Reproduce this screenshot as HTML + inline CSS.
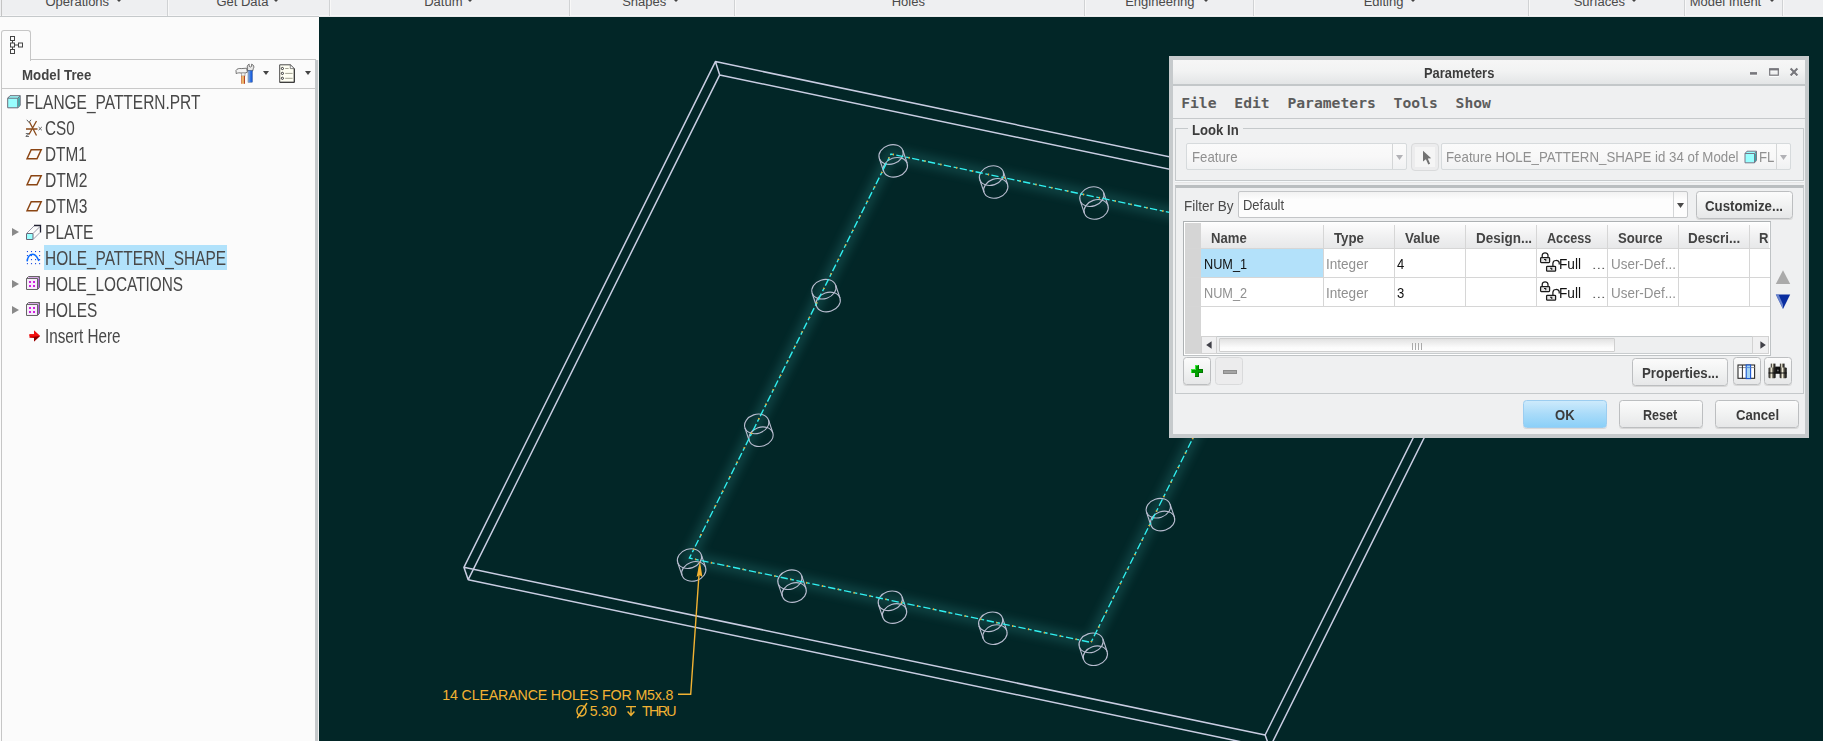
<!DOCTYPE html>
<html lang="en"><head><meta charset="utf-8"><title>FLANGE_PATTERN - Parameters</title>
<style>
html,body{margin:0;padding:0}
body{width:1823px;height:741px;overflow:hidden;position:relative;background:#022627;font-family:"Liberation Sans",sans-serif;color:#444}
i{display:block;position:absolute;font-style:normal}
.abs{position:absolute;display:block;line-height:0}
.t{position:absolute;white-space:nowrap;transform-origin:0 50%;color:#4a4a4a}
#cv{position:absolute;left:0;top:0}

#rib{position:absolute;left:0;top:0;width:1823px;height:17px;background:linear-gradient(#eeeff1 0,#eeeff1 15px,#f6f6f7 15px,#f6f6f7 16px,#eaebec 16px);overflow:hidden}
#rib:after{content:"";position:absolute;left:0;top:16px;width:319px;height:1px;background:#c5c9cb}
#rib:before{content:"";position:absolute;left:1px;top:0;width:1px;height:16px;background:#c4c4c4}
.rs{top:0;width:1px;height:15.5px;background:#d0d2d4;box-shadow:1px 0 0 #f8f8f8}
.rl{position:absolute;top:-6.8px;font-size:13px;line-height:18px;color:#4a4a4a;white-space:nowrap}
.ra{top:0px;width:0;height:0;border-left:2.5px solid transparent;border-right:2.5px solid transparent;border-top:2.5px solid #444}
#leftbg{position:absolute;left:0;top:17px;width:319px;height:724px;background:#fbfbfb}
#tab{position:absolute;left:1px;top:30px;width:27.5px;height:30px;border:1px solid #c6c6c6;border-bottom:none;border-radius:3px 3px 0 0;background:#fbfbfb;box-sizing:content-box}
#tab svg{position:absolute;left:7px;top:4px}
#tabline{left:30px;top:59px;width:286px;height:1px;background:#c6c6c6}
.t.nb{color:#444}
.da{width:0;height:0;border-left:3.5px solid transparent;border-right:3.5px solid transparent;border-top:4px solid #444}
#mtline{left:2px;top:87.5px;width:314px;height:1px;background:#c9c9c9}
.t.tt{color:#484848}
.selbg{background:#b1e2fb}
.ex{left:11.5px;width:0;height:0;border-top:4.5px solid transparent;border-bottom:4.5px solid transparent;border-left:7px solid #8a8a8a}
#lborder{left:1px;top:60px;width:1px;height:700px;background:#c6c6c6}
#rborder{left:315.2px;top:59.5px;width:3.9px;height:700px;background:linear-gradient(90deg,#c5c9cb 0,#c5c9cb 67%,#f0f0f0 67%,#f0f0f0 100%)}

#dlg{position:absolute;left:1169px;top:56px;width:640px;height:382px;background:#c6cacc}
#dlg>*{position:absolute;box-sizing:border-box}
#dlg .inner{background:#eff0f1}
#dlg .tbar{background:linear-gradient(#f6f6f6,#f2f3f3 45%,#e3e5e6)}
#dlg .tline{background:#c3c7c9}
#dlg .mline{background:#c6c9cb}
.t.b{color:#3c3c3c}
.t.mono{font-family:"DejaVu Sans Mono","Liberation Mono",monospace;font-weight:bold;color:#5c5c5c}
.t.g{color:#909090}
.t.k{color:#111}
.t.dots{color:#606060}
.t.hd{color:#444}
#dlg .grp{border:1px solid #c5c9cb;box-shadow:0 1px 0 #f5f8fa,0 2px 0 #e6e6e6}
#dlg .lg{background:#eff0f1}
#dlg .grp2{border:1px solid #c5c9cb;border-top:3px solid #babec0}
#dlg .fld{background:linear-gradient(#f2f2f2,#fdfdfd 30%,#fdfdfd);border:1px solid #c4c6c8;border-radius:2px}
#dlg .fld.dis{border-color:#d6dadc;background:linear-gradient(#fafafa,#f8f8f8 50%,#f0f1f2)}
.cbsep{top:0;bottom:0;width:1px;background:#d4d6d7;height:auto}
.cbs{position:absolute;right:3.2px;top:11px}
.cba{width:0;height:0;border-left:3.5px solid transparent;border-right:3.5px solid transparent;border-top:4.5px solid #444}
.cba.g{border-top-color:#aaa}
#dlg .btn{border:1px solid #bcbec0;border-radius:3.5px;background:linear-gradient(#fbfbfb,#f1f2f2 50%,#e6e7e8);box-shadow:0 1px 0 #d8d8d8}
#dlg .btn.disb{border-color:#d9dadb;background:#ececed;box-shadow:none}
#dlg .btn.ok{border-color:#9ccdf0;background:linear-gradient(#cdeafc,#a9dbf9 50%,#8bd0f8)}
#dlg .tbl{background:#fff;border:1px solid #adb1b3;border-bottom-color:#bfc3c5;border-right-color:#bfc3c5}
#dlg .rowhdr{background:#d5d5d5}
#dlg .thead{background:linear-gradient(#fdfdfd,#f1f1f2 50%,#e7e8e9)}
.vl{background:#d6d6d6}
.hl{background:#d6d6d6}
#dlg .sb{background:#eeeff0;border-top:1px solid #c5c9cb;border-bottom:1px solid #c8ccce}
#dlg .sbb{background:#f0f0f1;border:1px solid #d2d2d2}
#dlg .thumb{background:linear-gradient(#e2e2e2,#fbfbfb 70%,#fdfdfd);border:1px solid #cfcfcf;border-radius:1px}
</style></head><body>
<svg id="cv" width="1823" height="741" viewBox="0 0 1823 741">
<defs><filter id="gl" x="-5%" y="-5%" width="110%" height="110%"><feGaussianBlur stdDeviation="4"/></filter></defs>
<path d="M891.0,154.0 L1292.6,238.3 L1091.0,642.4 L689.4,558.1 Z" fill="none" stroke="#3a9a98" stroke-width="13" opacity="0.22" filter="url(#gl)"/>
<path d="M715.4,61.6 L463.9,567.3 L1265.1,735.0 L1516.9,229.7 Z M719.7,74.9 L468.2,579.7 L1269.7,747.8 L1521.2,243.0 Z M715.4,61.6 L719.7,74.9 M463.9,567.3 L468.2,579.7 M1265.1,735.0 L1269.7,747.8 M1516.9,229.7 L1521.2,243.0 " fill="none" stroke="#c9cde2" stroke-width="1.5" stroke-linejoin="round"/>
<g fill="none" stroke="#b9bdd0" stroke-width="1.1">
<ellipse cx="891.1" cy="154.5" rx="12.4" ry="9.5" transform="rotate(-18.6 891.1 154.5)"/>
<ellipse cx="895.4" cy="167.3" rx="12.4" ry="9.5" transform="rotate(-18.6 895.4 167.3)"/>
<path d="M902.9,150.5 L907.2,163.3"/>
<path d="M879.3,158.5 L883.6,171.3"/>
<ellipse cx="991.5" cy="175.6" rx="12.4" ry="9.5" transform="rotate(-18.6 991.5 175.6)"/>
<ellipse cx="995.8" cy="188.4" rx="12.4" ry="9.5" transform="rotate(-18.6 995.8 188.4)"/>
<path d="M1003.3,171.6 L1007.6,184.4"/>
<path d="M979.7,179.5 L984.0,192.3"/>
<ellipse cx="1091.9" cy="196.6" rx="12.4" ry="9.5" transform="rotate(-18.6 1091.9 196.6)"/>
<ellipse cx="1096.2" cy="209.4" rx="12.4" ry="9.5" transform="rotate(-18.6 1096.2 209.4)"/>
<path d="M1103.7,192.7 L1108.0,205.5"/>
<path d="M1080.1,200.6 L1084.4,213.4"/>
<ellipse cx="1192.3" cy="217.7" rx="12.4" ry="9.5" transform="rotate(-18.6 1192.3 217.7)"/>
<ellipse cx="1196.6" cy="230.5" rx="12.4" ry="9.5" transform="rotate(-18.6 1196.6 230.5)"/>
<path d="M1204.1,213.8 L1208.4,226.6"/>
<path d="M1180.5,221.7 L1184.8,234.5"/>
<ellipse cx="1292.7" cy="238.8" rx="12.4" ry="9.5" transform="rotate(-18.6 1292.7 238.8)"/>
<ellipse cx="1297.0" cy="251.6" rx="12.4" ry="9.5" transform="rotate(-18.6 1297.0 251.6)"/>
<path d="M1304.5,234.8 L1308.8,247.6"/>
<path d="M1280.9,242.8 L1285.2,255.6"/>
<ellipse cx="1225.5" cy="373.5" rx="12.4" ry="9.5" transform="rotate(-18.6 1225.5 373.5)"/>
<ellipse cx="1229.8" cy="386.3" rx="12.4" ry="9.5" transform="rotate(-18.6 1229.8 386.3)"/>
<path d="M1237.3,369.5 L1241.6,382.3"/>
<path d="M1213.7,377.5 L1218.0,390.3"/>
<ellipse cx="1158.3" cy="508.2" rx="12.4" ry="9.5" transform="rotate(-18.6 1158.3 508.2)"/>
<ellipse cx="1162.6" cy="521.0" rx="12.4" ry="9.5" transform="rotate(-18.6 1162.6 521.0)"/>
<path d="M1170.1,504.2 L1174.4,517.0"/>
<path d="M1146.5,512.2 L1150.8,525.0"/>
<ellipse cx="1091.1" cy="642.9" rx="12.4" ry="9.5" transform="rotate(-18.6 1091.1 642.9)"/>
<ellipse cx="1095.4" cy="655.7" rx="12.4" ry="9.5" transform="rotate(-18.6 1095.4 655.7)"/>
<path d="M1102.9,638.9 L1107.2,651.7"/>
<path d="M1079.3,646.9 L1083.6,659.7"/>
<ellipse cx="990.7" cy="621.8" rx="12.4" ry="9.5" transform="rotate(-18.6 990.7 621.8)"/>
<ellipse cx="995.0" cy="634.6" rx="12.4" ry="9.5" transform="rotate(-18.6 995.0 634.6)"/>
<path d="M1002.5,617.9 L1006.8,630.7"/>
<path d="M978.9,625.8 L983.2,638.6"/>
<ellipse cx="890.3" cy="600.8" rx="12.4" ry="9.5" transform="rotate(-18.6 890.3 600.8)"/>
<ellipse cx="894.6" cy="613.5" rx="12.4" ry="9.5" transform="rotate(-18.6 894.6 613.5)"/>
<path d="M902.1,596.8 L906.4,609.6"/>
<path d="M878.5,604.7 L882.8,617.5"/>
<ellipse cx="789.9" cy="579.7" rx="12.4" ry="9.5" transform="rotate(-18.6 789.9 579.7)"/>
<ellipse cx="794.2" cy="592.5" rx="12.4" ry="9.5" transform="rotate(-18.6 794.2 592.5)"/>
<path d="M801.7,575.7 L806.0,588.5"/>
<path d="M778.1,583.6 L782.4,596.4"/>
<ellipse cx="689.5" cy="558.6" rx="12.4" ry="9.5" transform="rotate(-18.6 689.5 558.6)"/>
<ellipse cx="693.8" cy="571.4" rx="12.4" ry="9.5" transform="rotate(-18.6 693.8 571.4)"/>
<path d="M701.3,554.6 L705.6,567.4"/>
<path d="M677.7,562.6 L682.0,575.4"/>
<ellipse cx="756.7" cy="423.9" rx="12.4" ry="9.5" transform="rotate(-18.6 756.7 423.9)"/>
<ellipse cx="761.0" cy="436.7" rx="12.4" ry="9.5" transform="rotate(-18.6 761.0 436.7)"/>
<path d="M768.5,419.9 L772.8,432.7"/>
<path d="M744.9,427.9 L749.2,440.7"/>
<ellipse cx="823.9" cy="289.2" rx="12.4" ry="9.5" transform="rotate(-18.6 823.9 289.2)"/>
<ellipse cx="828.2" cy="302.0" rx="12.4" ry="9.5" transform="rotate(-18.6 828.2 302.0)"/>
<path d="M835.7,285.2 L840.0,298.0"/>
<path d="M812.1,293.2 L816.4,306.0"/>
</g>
<path d="M891.0,154.0 L1292.6,238.3 L1091.0,642.4 L689.4,558.1 Z" fill="none" stroke="#30f0f0" stroke-width="1.35" stroke-dasharray="7.3 2.7 3.8 2.4" stroke-dashoffset="10.8"/>
<path d="M891.0,154.0 L1292.6,238.3 L1091.0,642.4 L689.4,558.1 Z" fill="none" stroke="#f2a020" stroke-width="1.7" stroke-dasharray="1.2 15" stroke-dashoffset="14.4"/>
<g fill="none" stroke="#f2b233" stroke-width="1.4">
<path d="M678,694.3 L690.7,694.3 L699.6,566"/>
</g>
<path d="M699.9,561 L696.6,577 L699.4,575 L702.4,577 Z" fill="#f2b233"/>
<g fill="#f2b233" font-family="'Liberation Sans',sans-serif" font-size="14.2">
<text x="442.3" y="699.6" textLength="231.2" lengthAdjust="spacing">14 CLEARANCE HOLES FOR M5x.8</text>
<text x="589.8" y="715.8" textLength="26.8" lengthAdjust="spacing">5.30</text>
<text x="642" y="715.8" textLength="34.5" lengthAdjust="spacing">THRU</text>
</g>
<g fill="none" stroke="#f2b233" stroke-width="1.4">
<ellipse cx="581.5" cy="710.8" rx="4.6" ry="5.2"/><path d="M577.2,718 L587,703"/>
<path d="M626,706.6 L636,706.6 M631,706.6 L631,715.5 M627.6,711.5 L631,715.5 L634.4,711.5"/>
</g>
</svg>
<div id="rib"><i class="rs" style="left:167.0px"></i><i class="rs" style="left:329.0px"></i><i class="rs" style="left:568.5px"></i><i class="rs" style="left:733.5px"></i><i class="rs" style="left:1084.0px"></i><i class="rs" style="left:1252.5px"></i><i class="rs" style="left:1528.0px"></i><i class="rs" style="left:1684.0px"></i><i class="rs" style="left:1781.5px"></i><span class="rl" style="left:45.5px">Operations</span><i class="ra" style="left:116.5px"></i><span class="rl" style="left:216.39999999999998px">Get Data</span><i class="ra" style="left:273.5px"></i><span class="rl" style="left:424.2px">Datum</span><i class="ra" style="left:467.5px"></i><span class="rl" style="left:622.2px">Shapes</span><i class="ra" style="left:674.0px"></i><span class="rl" style="left:891.7px">Holes</span><span class="rl" style="left:1125.2px">Engineering</span><i class="ra" style="left:1203.5px"></i><span class="rl" style="left:1363.7px">Editing</span><i class="ra" style="left:1411.0px"></i><span class="rl" style="left:1573.7px">Surfaces</span><i class="ra" style="left:1632.0px"></i><span class="rl" style="left:1689.7px">Model Intent</span><i class="ra" style="left:1769.5px"></i></div>
<div id="leftbg"></div>
<div id="tab"><svg width="16" height="20" viewBox="0 0 16 20"><g fill="#fafafa" stroke="#444" stroke-width="1"><path d="M3.5,5 V15 M3.5,10 H9" fill="none"/><rect x="1.5" y="1.5" width="4" height="4"/><rect x="1.5" y="8" width="4" height="4"/><rect x="1.5" y="14.5" width="4" height="4"/><rect x="9.5" y="8" width="4" height="4"/></g></svg></div>
<i id="tabline"></i>
<span class="t nb" style="left:21.91px;top:65.67px;font-size:14.8px;line-height:19px;font-weight:bold;transform:scaleX(0.8966);">Model Tree</span>
<span class="abs" style="left:235px;top:63px"><svg width="22" height="22" viewBox="0 0 22 22"><defs><linearGradient id="hg" x1="0" x2="1" y1="0" y2="0"><stop offset="0" stop-color="#c04008"/><stop offset=".45" stop-color="#ffe890"/><stop offset="1" stop-color="#a01000"/></linearGradient><linearGradient id="wg" x1="0" x2="1" y1="0" y2="0"><stop offset="0" stop-color="#a8c0dc"/><stop offset=".5" stop-color="#3a78e0"/><stop offset="1" stop-color="#0a50d8"/></linearGradient></defs><path d="M12.3,7.6 L12.6,5.2 C11.6,3.6 12.6,1.6 14.2,1.2 L14.2,3.4 L15.4,4 L16.6,3.4 L16.6,1.2 C18.6,1.8 19.6,3.8 18.4,5.4 L17.6,8 Z" fill="#e8e8e8" stroke="#555" stroke-width="0.8"/><rect x="13" y="7.6" width="4.4" height="11.6" fill="url(#wg)" stroke="#2a4a80" stroke-width="0.4"/><path d="M1,7.4 C2,5.6 4.4,5.2 6.2,5.6 L11.6,5.2 L12.4,9.2 L10,10.1 L6.2,10.1 C4.6,9.6 2.6,9.8 1.2,10.6 Z" fill="#f4f4f4" stroke="#555" stroke-width="0.8"/><rect x="6.3" y="10" width="3.7" height="3" fill="#f2f2f2" stroke="#777" stroke-width="0.5"/><rect x="6.3" y="12.8" width="3.7" height="8" fill="url(#hg)"/></svg></span>
<i class="da" style="left:262.5px;top:71px"></i>
<span class="abs" style="left:278px;top:63px"><svg width="18" height="22" viewBox="0 0 18 22"><path d="M1.7,1.8 L12.3,1.8 L16.3,5.6 L16.3,19.3 L1.7,19.3 Z" fill="#fffff4" stroke="#4a4a4a" stroke-width="1"/><path d="M1.7,19.3 L16.3,19.3 L16.3,5.6" fill="none" stroke="#333" stroke-width="1"/><path d="M12.3,1.8 L12.3,5.6 L16.3,5.6 Z" fill="#fff" stroke="#555" stroke-width="0.7"/><g fill="#fff" stroke="#222" stroke-width="0.9"><circle cx="4.4" cy="5.5" r="1.1"/><circle cx="4.4" cy="10.4" r="1.1"/><circle cx="4.4" cy="15.3" r="1.1"/></g><path d="M7.2,5.5 H10.6 M7.2,10.4 H14.6 M7.2,15.3 H14.6" stroke="#a4a494" stroke-width="1" fill="none"/></svg></span>
<i class="da" style="left:304.5px;top:71px"></i>
<i id="mtline"></i>
<span class="abs" style="left:7px;top:94px"><svg width="16" height="16" viewBox="0 0 16 16"><path d="M0.7,4.2 L3,1.7 L13.2,1.7 L13.2,11.5 L10.8,13.8 L0.7,13.8 Z" fill="#9ff" stroke="#6a6a78" stroke-width="1"/><path d="M0.7,4.2 L10.8,4.2 L10.8,13.8 M10.8,4.2 L13.2,1.7" fill="none" stroke="#6a6a78" stroke-width="1"/><path d="M11.3,4.5 L12.7,3 L12.7,11.2 L11.3,12.7Z" fill="#2a9a9a"/></svg></span><span class="t tt" style="left:24.63px;top:89.27px;font-size:20.3px;line-height:26px;transform:scaleX(0.7633);">FLANGE_PATTERN.PRT</span><span class="abs" style="left:24.5px;top:118.5px"><svg width="18" height="18" viewBox="0 0 18 18"><g stroke="#8a4a1a" stroke-width="1.3" fill="none"><path d="M1,10 L12.5,10 M4.5,3 L11.5,16.5 M11.5,2 L4,15.5"/></g><g stroke="#606060" stroke-width="1" fill="none"><path d="M13.6,8 L16.8,11.2 M16.8,8 L13.6,11.2 M1.8,0.8 L4,3.4 L6,0.8 M0.8,14.6 L4,14.6 L0.8,17.4 L4,17.4"/></g></svg></span><span class="t tt" style="left:45.31px;top:115.27px;font-size:20.3px;line-height:26px;transform:scaleX(0.7525);">CS0</span><span class="abs" style="left:25.5px;top:147px"><svg width="18" height="14" viewBox="0 0 18 14"><path d="M5.2,2.7 L15.2,2.7 L11,11.8 L1,11.8 Z" fill="none" stroke="#8a4513" stroke-width="1.5"/></svg></span><span class="t tt" style="left:44.74px;top:141.27px;font-size:20.3px;line-height:26px;transform:scaleX(0.7548);">DTM1</span><span class="abs" style="left:25.5px;top:173px"><svg width="18" height="14" viewBox="0 0 18 14"><path d="M5.2,2.7 L15.2,2.7 L11,11.8 L1,11.8 Z" fill="none" stroke="#8a4513" stroke-width="1.5"/></svg></span><span class="t tt" style="left:44.72px;top:167.27px;font-size:20.3px;line-height:26px;transform:scaleX(0.7704);">DTM2</span><span class="abs" style="left:25.5px;top:199px"><svg width="18" height="14" viewBox="0 0 18 14"><path d="M5.2,2.7 L15.2,2.7 L11,11.8 L1,11.8 Z" fill="none" stroke="#8a4513" stroke-width="1.5"/></svg></span><span class="t tt" style="left:44.72px;top:193.27px;font-size:20.3px;line-height:26px;transform:scaleX(0.7692);">DTM3</span><i class="ex" style="top:228px"></i><span class="abs" style="left:25px;top:222.5px"><svg width="18" height="18" viewBox="0 0 18 18"><path d="M1.5,10.5 L8,10.5 L8,16.5 L1.5,16.5 Z" fill="#9ff" stroke="#667" stroke-width="1"/><path d="M1.5,10.5 L9,3 M8,10.5 L15,3.5 M8,16.5 L15,9.5" fill="none" stroke="#99a" stroke-width="1"/><path d="M9,2.5 L15.5,2.5 L15.5,9.5" fill="none" stroke="#223" stroke-width="1.3"/></svg></span><span class="t tt" style="left:44.72px;top:219.27px;font-size:20.3px;line-height:26px;transform:scaleX(0.7708);">PLATE</span><span class="abs" style="left:25px;top:249px"><svg width="16" height="16" viewBox="0 0 16 16"><g fill="#1848e0"><rect x="1.90" y="2.00" width="1.1" height="1.1"/><rect x="1.90" y="6.03" width="1.1" height="1.1"/><rect x="1.90" y="10.06" width="1.1" height="1.1"/><rect x="1.90" y="14.09" width="1.1" height="1.1"/><rect x="5.95" y="2.00" width="1.1" height="1.1"/><rect x="5.95" y="6.03" width="1.1" height="1.1"/><rect x="5.95" y="10.06" width="1.1" height="1.1"/><rect x="5.95" y="14.09" width="1.1" height="1.1"/><rect x="10.00" y="2.00" width="1.1" height="1.1"/><rect x="10.00" y="6.03" width="1.1" height="1.1"/><rect x="10.00" y="10.06" width="1.1" height="1.1"/><rect x="10.00" y="14.09" width="1.1" height="1.1"/><rect x="14.05" y="2.00" width="1.1" height="1.1"/><rect x="14.05" y="6.03" width="1.1" height="1.1"/><rect x="14.05" y="10.06" width="1.1" height="1.1"/><rect x="14.05" y="14.09" width="1.1" height="1.1"/></g><path d="M2.1,12.3 C2.8,7.5 5.5,5.3 7.9,5.3 C10.5,5.3 12.2,8 13.9,12" fill="none" stroke="#0a6cff" stroke-width="1.5"/></svg></span><i class="selbg" style="left:44px;top:245px;width:183px;height:25px"></i><span class="t tt" style="left:44.74px;top:245.27px;font-size:20.3px;line-height:26px;transform:scaleX(0.7603);">HOLE_PATTERN_SHAPE</span><i class="ex" style="top:280px"></i><span class="abs" style="left:25.2px;top:275px"><svg width="16" height="16" viewBox="0 0 16 16"><path d="M1.5,3.5 L3.5,1.5 L14.5,1.5 L14.5,12.5 L12.5,14.5 L1.5,14.5 Z" fill="#f6ecfa" stroke="#666" stroke-width="1"/><path d="M1.5,3.5 L12.5,3.5 L12.5,14.5 M12.5,3.5 L14.5,1.5" fill="none" stroke="#666" stroke-width="1"/><path d="M3,3 L4,2 L14,2 L13,3Z" fill="#d8a8e8"/><path d="M13,4 L14.1,2.8 L14.1,12.2 L13,13.4Z" fill="#b060d8"/><g fill="#d020e0"><rect x="4" y="6" width="2" height="2"/><rect x="8" y="6" width="2" height="2"/><rect x="4" y="10" width="2" height="2"/><rect x="8" y="10" width="2" height="2"/></g></svg></span><span class="t tt" style="left:44.74px;top:271.27px;font-size:20.3px;line-height:26px;transform:scaleX(0.7578);">HOLE_LOCATIONS</span><i class="ex" style="top:306px"></i><span class="abs" style="left:25.2px;top:301px"><svg width="16" height="16" viewBox="0 0 16 16"><path d="M1.5,3.5 L3.5,1.5 L14.5,1.5 L14.5,12.5 L12.5,14.5 L1.5,14.5 Z" fill="#f6ecfa" stroke="#666" stroke-width="1"/><path d="M1.5,3.5 L12.5,3.5 L12.5,14.5 M12.5,3.5 L14.5,1.5" fill="none" stroke="#666" stroke-width="1"/><path d="M3,3 L4,2 L14,2 L13,3Z" fill="#d8a8e8"/><path d="M13,4 L14.1,2.8 L14.1,12.2 L13,13.4Z" fill="#b060d8"/><g fill="#d020e0"><rect x="4" y="6" width="2" height="2"/><rect x="8" y="6" width="2" height="2"/><rect x="4" y="10" width="2" height="2"/><rect x="8" y="10" width="2" height="2"/></g></svg></span><span class="t tt" style="left:44.74px;top:297.27px;font-size:20.3px;line-height:26px;transform:scaleX(0.7589);">HOLES</span><span class="abs" style="left:28px;top:328.5px"><svg width="14" height="14" viewBox="0 0 14 14"><path d="M1.5,5.2 L6,5.2 L6,1.5 L12,7 L6,12.5 L6,8.8 L1.5,8.8 Z" fill="#e80000"/><path d="M6,8.8 L6,12.5 L12,7 L1.5,8.8 Z" fill="#8a0000"/><path d="M1.5,7 L12,7 L6,1.5 L6,5.2 L1.5,5.2Z" fill="#f01010"/></svg></span><span class="t tt" style="left:44.63px;top:323.27px;font-size:20.3px;line-height:26px;transform:scaleX(0.7521);">Insert Here</span>
<i id="lborder"></i><i id="rborder"></i>
<div id="dlg">
<div class="inner" style="left:4px;top:4px;width:632px;height:373.6px;"></div>
<div class="tbar" style="left:4px;top:4px;width:632px;height:24px;"></div>
<div class="tline" style="left:4px;top:28px;width:632px;height:2px;"></div>
<span class="t b" style="left:254.61px;top:7.78px;font-size:14.5px;line-height:19px;font-weight:bold;transform:scaleX(0.8901);">Parameters</span>
<span class="abs" style="left:579px;top:10px"><svg width="52" height="12" viewBox="0 0 52 12"><g fill="none" stroke="#fff" stroke-width="2" transform="translate(0,1)"><path d="M2,7.4 H9"/><rect x="21.7" y="3.6" width="8.6" height="5.6" stroke-width="1.2"/><path d="M21.2,3.2 H30.8" stroke-width="2.2"/><path d="M42.6,2.6 L49.4,9.4 M49.4,2.6 L42.6,9.4"/></g><g fill="none" stroke="#77777c" stroke-width="2"><path d="M2,7.4 H9" stroke-width="2.6"/><rect x="21.7" y="3.6" width="8.6" height="5.6" stroke-width="1.2"/><path d="M21.1,3.2 H30.9" stroke-width="2.2"/><path d="M42.6,2.6 L49.4,9.4 M49.4,2.6 L42.6,9.4" stroke-width="2.1"/></g></svg></span>
<div class="mline" style="left:4px;top:62px;width:632px;height:1px;"></div>
<span class="t mono" style="left:12.20px;top:37.21px;font-size:14.7px;line-height:20px">File</span>
<span class="t mono" style="left:65.30px;top:37.21px;font-size:14.7px;line-height:20px">Edit</span>
<span class="t mono" style="left:118.40px;top:37.21px;font-size:14.7px;line-height:20px">Parameters</span>
<span class="t mono" style="left:224.60px;top:37.21px;font-size:14.7px;line-height:20px">Tools</span>
<span class="t mono" style="left:286.55px;top:37.21px;font-size:14.7px;line-height:20px">Show</span>
<div class="grp" style="left:6px;top:72px;width:628.6px;height:53px;"></div>
<div class="lg" style="left:19px;top:66px;width:55px;height:14px;"></div>
<span class="t b" style="left:23.20px;top:64.78px;font-size:14.5px;line-height:19px;font-weight:bold;transform:scaleX(0.9049);">Look In</span>
<div class="fld dis" style="left:17px;top:87px;width:221px;height:27px;"><i class="cbsep" style="right:13.5px"></i><svg class="cbs" width="7" height="5" viewBox="0 0 7 5"><path d="M0,0 H7 L3.5,5 Z" fill="#b2b2b6"/></svg></div>
<span class="t g" style="left:22.63px;top:91.85px;font-size:14.3px;line-height:19px;transform:scaleX(0.9230);">Feature</span>
<div class="btn disb" style="left:242px;top:87px;width:28px;height:28px;border-radius:4px"><i style="left:3px;top:3px;width:20px;height:20px;background:#f5f5f5"></i><svg width="10" height="16" viewBox="0 0 10 16" style="position:absolute;left:9.6px;top:5.6px"><path d="M1,0.8 L1,11.6 L3.9,9.2 L6.3,14.6 L8.1,13.8 L5.8,8.6 L9.2,8.2 Z" fill="#727272"/></svg></div>
<div class="fld dis" style="left:272px;top:87px;width:350px;height:27px;"><i class="cbsep" style="right:13.5px"></i><svg class="cbs" width="7" height="5" viewBox="0 0 7 5"><path d="M0,0 H7 L3.5,5 Z" fill="#b2b2b6"/></svg></div>
<span class="t g" style="left:277.43px;top:91.85px;font-size:14.3px;line-height:19px;transform:scaleX(0.9288);">Feature HOLE_PATTERN_SHAPE id 34 of Model</span>
<span class="abs" style="left:575px;top:93.5px"><svg width="14" height="14" viewBox="0 0 14 14"><path d="M1,3.5 L3,1.2 L12.5,1.2 L12.5,10.5 L10.5,12.8 L1,12.8 Z" fill="#9ff" stroke="#778" stroke-width="1"/><path d="M1,3.5 L10.5,3.5 L10.5,12.8 M10.5,3.5 L12.5,1.2" fill="none" stroke="#778" stroke-width="1"/><path d="M11,3.8 L12,2.6 L12,10.2 L11,11.4Z" fill="#3aa"/></svg></span>
<span class="t g" style="left:589.54px;top:91.85px;font-size:14.3px;line-height:19px;transform:scaleX(0.9223);">FL</span>
<div class="grp2" style="left:6px;top:129px;width:628.6px;height:209px;"></div>
<span class="t " style="left:15.21px;top:140.78px;font-size:14.5px;line-height:19px;transform:scaleX(0.9302);">Filter By</span>
<div class="fld" style="left:69px;top:135px;width:450px;height:27px;"><i class="cbsep" style="right:13.5px"></i><svg class="cbs" width="7" height="5" viewBox="0 0 7 5"><path d="M0,0 H7 L3.5,5 Z" fill="#4a4a4a"/></svg></div>
<span class="t " style="left:74.14px;top:139.78px;font-size:14.5px;line-height:19px;transform:scaleX(0.8947);">Default</span>
<div class="btn" style="left:527px;top:135px;width:97px;height:28px;"></div>
<span class="t b" style="left:536.30px;top:140.78px;font-size:14.5px;line-height:19px;font-weight:bold;transform:scaleX(0.9137);">Customize...</span>
<div class="tbl" style="left:14px;top:165px;width:588px;height:134.6px;"></div>
<div class="rowhdr" style="left:16px;top:167px;width:15.6px;height:131px;"></div>
<div class="thead" style="left:31.6px;top:167px;width:568.9px;height:25.4px;"></div>
<i class="vl" style="left:154.1px;top:169px;width:1.0px;height:81.2px;"></i>
<i class="vl" style="left:224.9px;top:169px;width:1.0px;height:81.2px;"></i>
<i class="vl" style="left:295.9px;top:169px;width:1.0px;height:81.2px;"></i>
<i class="vl" style="left:367.0px;top:169px;width:1.0px;height:81.2px;"></i>
<i class="vl" style="left:437.8px;top:169px;width:1.0px;height:81.2px;"></i>
<i class="vl" style="left:509.0px;top:169px;width:1.0px;height:81.2px;"></i>
<i class="vl" style="left:580.0px;top:169px;width:1.0px;height:81.2px;"></i>
<span class="t b hd" style="left:41.99px;top:173.52px;font-size:13.8px;line-height:18px;font-weight:bold;transform:scaleX(0.9494);">Name</span>
<span class="t b hd" style="left:165.46px;top:173.52px;font-size:13.8px;line-height:18px;font-weight:bold;transform:scaleX(0.9616);">Type</span>
<span class="t b hd" style="left:235.88px;top:173.52px;font-size:13.8px;line-height:18px;font-weight:bold;transform:scaleX(0.9720);">Value</span>
<span class="t b hd" style="left:306.57px;top:173.52px;font-size:13.8px;line-height:18px;font-weight:bold;transform:scaleX(0.9759);">Design...</span>
<span class="t b hd" style="left:377.68px;top:173.52px;font-size:13.8px;line-height:18px;font-weight:bold;transform:scaleX(0.9151);">Access</span>
<span class="t b hd" style="left:448.77px;top:173.52px;font-size:13.8px;line-height:18px;font-weight:bold;transform:scaleX(0.9510);">Source</span>
<span class="t b hd" style="left:519.47px;top:173.52px;font-size:13.8px;line-height:18px;font-weight:bold;transform:scaleX(0.9721);">Descri...</span>
<span class="t b hd" style="left:589.89px;top:173.52px;font-size:13.8px;line-height:18px;font-weight:bold;transform:scaleX(0.9500);">R</span>
<i class="hl" style="left:16.5px;top:192px;width:584.0px;height:1px;"></i>
<i class="hl" style="left:16.5px;top:221px;width:584.0px;height:1px;"></i>
<i class="hl" style="left:16.5px;top:250px;width:584.0px;height:1px;"></i>
<i style="left:31.6px;top:193px;width:122.4px;height:28px;background:#b3e1fa"></i>
<span class="t k" style="left:34.56px;top:198.78px;font-size:14.5px;line-height:19px;transform:scaleX(0.8760);">NUM_1</span>
<span class="t g" style="left:156.88px;top:198.78px;font-size:14.5px;line-height:19px;transform:scaleX(0.9353);">Integer</span>
<span class="t k" style="left:228.25px;top:198.78px;font-size:14.5px;line-height:19px;transform:scaleX(0.9000);">4</span>
<span class="abs" style="left:370px;top:195.39999999999998px"><svg width="22" height="22" viewBox="0 0 22 22"><g fill="none" stroke="#1a1a1a" stroke-width="1.25"><path d="M3.2,6.5 V4.6 C3.2,0.9 9,0.9 9,4.6 V6.5"/><rect x="1.6" y="6.6" width="9" height="4.9" rx="0.8" fill="#e4e4e4"/><path d="M13.9,15 V12.2 C14.2,8.6 19.6,8.8 20.2,11.6 V13.6"/><rect x="7.6" y="15.3" width="9" height="4.9" rx="0.8" fill="#e4e4e4"/></g><path d="M5,8 h2.3 v2.3 h-1 v-1.3 h-1.3z M11,16.7 h2.3 v2.3 h-1 v-1.3 h-1.3z" fill="#1a1a1a"/></svg></span>
<span class="t k" style="left:390.49px;top:198.78px;font-size:14.5px;line-height:19px;transform:scaleX(0.9436);">Full</span>
<span class="t dots" style="left:423.02px;top:201.82px;font-size:11.5px;line-height:15px;transform:scaleX(1.4264);">...</span>
<span class="t g" style="left:441.54px;top:198.78px;font-size:14.5px;line-height:19px;transform:scaleX(0.9262);">User-Def...</span>
<span class="t g" style="left:34.56px;top:227.78px;font-size:14.5px;line-height:19px;transform:scaleX(0.8765);">NUM_2</span>
<span class="t g" style="left:156.88px;top:227.78px;font-size:14.5px;line-height:19px;transform:scaleX(0.9353);">Integer</span>
<span class="t k" style="left:227.94px;top:227.78px;font-size:14.5px;line-height:19px;transform:scaleX(0.9000);">3</span>
<span class="abs" style="left:370px;top:224.3px"><svg width="22" height="22" viewBox="0 0 22 22"><g fill="none" stroke="#1a1a1a" stroke-width="1.25"><path d="M3.2,6.5 V4.6 C3.2,0.9 9,0.9 9,4.6 V6.5"/><rect x="1.6" y="6.6" width="9" height="4.9" rx="0.8" fill="#e4e4e4"/><path d="M13.9,15 V12.2 C14.2,8.6 19.6,8.8 20.2,11.6 V13.6"/><rect x="7.6" y="15.3" width="9" height="4.9" rx="0.8" fill="#e4e4e4"/></g><path d="M5,8 h2.3 v2.3 h-1 v-1.3 h-1.3z M11,16.7 h2.3 v2.3 h-1 v-1.3 h-1.3z" fill="#1a1a1a"/></svg></span>
<span class="t k" style="left:390.49px;top:227.78px;font-size:14.5px;line-height:19px;transform:scaleX(0.9436);">Full</span>
<span class="t dots" style="left:423.02px;top:230.82px;font-size:11.5px;line-height:15px;transform:scaleX(1.4264);">...</span>
<span class="t g" style="left:441.54px;top:227.78px;font-size:14.5px;line-height:19px;transform:scaleX(0.9262);">User-Def...</span>
<div class="sb" style="left:31.6px;top:280.4px;width:568.9px;height:17.2px;"></div>
<div class="sbb" style="left:31.6px;top:280.4px;width:16.6px;height:17.2px;"><svg width="6" height="8" viewBox="0 0 6 8" style="position:absolute;left:4px;top:3.6px"><path d="M5.6,0.2 V7.8 L0.2,4 Z" fill="#404048"/></svg></div>
<div class="sbb" style="left:583.2px;top:280.4px;width:17.3px;height:17.2px;"><svg width="6" height="8" viewBox="0 0 6 8" style="position:absolute;left:6.4px;top:3.6px"><path d="M0.4,0.2 V7.8 L5.8,4 Z" fill="#404048"/></svg></div>
<div class="thumb" style="left:49.6px;top:282px;width:396.6px;height:14px;"><i style="left:192px;top:4px;width:11px;height:7px;background:repeating-linear-gradient(90deg,#aaa 0,#aaa 1px,transparent 1px,transparent 3px)"></i></div>
<span class="abs" style="left:606.3px;top:213.5px"><svg width="16" height="40" viewBox="0 0 16 40"><path d="M8,0.3 L15.2,14 L0.8,14 Z" fill="#aaa"/><path d="M0.8,24.5 L15.2,24.5 L8,39 Z" fill="#0a2ea0"/><path d="M0.8,24.5 L3.5,24.5 L8,34.5 L8,39 Z" fill="#7f98d8" opacity=".8"/></svg></span>
<div class="btn" style="left:14px;top:301px;width:28px;height:28px;"><svg width="14" height="14" viewBox="0 0 14 14" style="position:absolute;left:6.3px;top:6.1px"><path d="M5,1 H9 V5 H13 V9 H9 V13 H5 V9 H1 V5 H5 Z" fill="#00a000"/><path d="M5,1 H9 V2 H6 V6 H2 V9 H1 V5 H5Z" fill="#38e838"/><path d="M9,1 V5 H13 V9 H9 V13 H5 V12 H8 V8 H12 V6 H8 V1Z" fill="#007000" opacity=".85"/></svg></div>
<div class="btn disb" style="left:46px;top:301px;width:28px;height:28px;"><i style="left:7px;top:11.5px;width:13.5px;height:4px;background:#a4a4a4;border:0.5px solid #8c8c8c;box-sizing:border-box"></i></div>
<div class="btn" style="left:463px;top:302px;width:96px;height:28px;"></div>
<span class="t b" style="left:472.79px;top:307.78px;font-size:14.5px;line-height:19px;font-weight:bold;transform:scaleX(0.9155);">Properties...</span>
<div class="btn" style="left:564px;top:301px;width:28px;height:28px;"><svg width="19" height="16" viewBox="0 0 19 16" style="position:absolute;left:3.2px;top:5.5px"><rect x="1" y="1" width="16.6" height="13.3" fill="#fff" stroke="#2a2a2a" stroke-width="1.1"/><path d="M1,3.6 H17.6" stroke="#8a8a8a" stroke-width="1" fill="none"/><path d="M5.4,1 V14.6" stroke="#2a2a2a" stroke-width="1" fill="none"/><rect x="9.2" y="1" width="4.4" height="13.6" fill="#a4d4f2" stroke="#1a56d0" stroke-width="1.1"/><path d="M9.2,3.6 H13.6" stroke="#5a90e0" stroke-width="1" fill="none"/></svg></div>
<div class="btn" style="left:595px;top:301px;width:28px;height:28px;"><svg width="22" height="18" viewBox="0 0 22 18" style="position:absolute;left:3px;top:5.4px"><defs><linearGradient id="bg" x1="0" x2="1" y1="0" y2="0"><stop offset="0" stop-color="#000"/><stop offset=".22" stop-color="#7a766a"/><stop offset=".4" stop-color="#f0ecd8"/><stop offset=".62" stop-color="#5a574e"/><stop offset="1" stop-color="#000"/></linearGradient></defs><rect x="7.2" y="3.6" width="5.4" height="7.2" fill="#111"/><circle cx="9.9" cy="7.4" r="0.9" fill="#777"/><rect x="2.8" y="0.6" width="4.6" height="4.6" fill="url(#bg)"/><rect x="11.9" y="0.6" width="4.6" height="4.6" fill="url(#bg)"/><rect x="0.6" y="4.6" width="7" height="10.6" rx="1" fill="url(#bg)"/><rect x="11.7" y="4.6" width="7" height="10.6" rx="1" fill="url(#bg)"/><path d="M0.6,10 H7.6 M11.7,10 H18.7" stroke="#111" stroke-width="1" fill="none"/></svg></div>
<div class="btn ok" style="left:354px;top:344px;width:84px;height:28px;"></div>
<div class="btn" style="left:450px;top:344px;width:84px;height:28px;"></div>
<div class="btn" style="left:546px;top:344px;width:84px;height:28px;"></div>
<span class="t b" style="left:385.51px;top:349.78px;font-size:14.5px;line-height:19px;font-weight:bold;transform:scaleX(0.9000);">OK</span>
<span class="t b" style="left:473.84px;top:349.78px;font-size:14.5px;line-height:19px;font-weight:bold;transform:scaleX(0.8668);">Reset</span>
<span class="t b" style="left:566.50px;top:349.78px;font-size:14.5px;line-height:19px;font-weight:bold;transform:scaleX(0.9059);">Cancel</span>
</div>
</body></html>
